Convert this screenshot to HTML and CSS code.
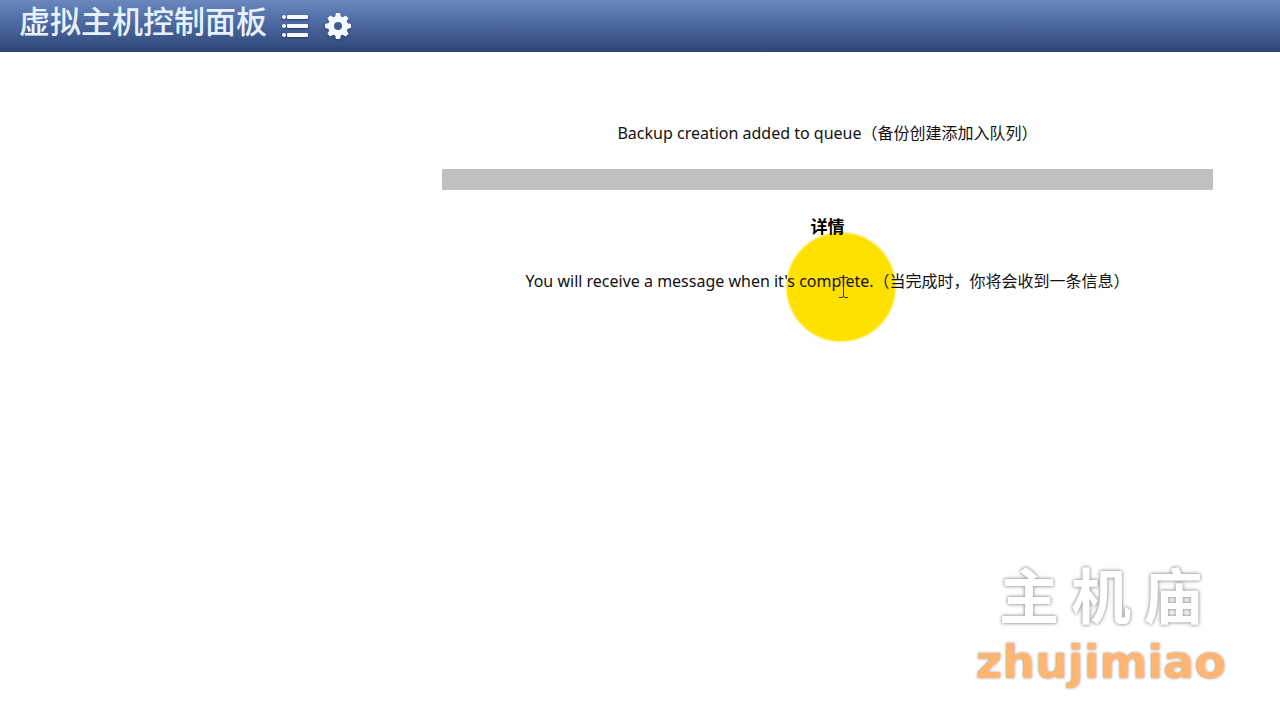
FILE: index.html
```html
<!DOCTYPE html>
<html lang="zh-CN">
<head>
  <meta charset="UTF-8">
  <title>虚拟主机控制面板</title>
  <link rel="stylesheet" href="styles.css">
</head>
<body>
  <header class="topbar">
    <h1 class="brand">虚拟主机控制面板</h1>
    <nav class="tools">
      <button type="button" class="tool" aria-label="菜单">
        <svg width="28" height="28" viewBox="0 0 28 28" fill="#f4faff">
          <circle cx="3" cy="5" r="2"/>
          <circle cx="3" cy="14" r="2"/>
          <circle cx="3" cy="23" r="2"/>
          <rect x="6" y="3" width="21" height="4" rx="1"/>
          <rect x="6" y="12" width="21" height="4" rx="1"/>
          <rect x="6" y="21" width="21" height="4" rx="1"/>
        </svg>
      </button>
      <button type="button" class="tool" aria-label="设置">
        <svg width="28" height="28" viewBox="0 0 28 28">
          <g fill="#f4faff">
            <path id="teeth" d="M11 5 12 1h4l1 4v18l-1 4h-4l-1-4z"/>
            <use href="#teeth" transform="rotate(45 14 14)"/>
            <use href="#teeth" transform="rotate(90 14 14)"/>
            <use href="#teeth" transform="rotate(135 14 14)"/>
            <circle cx="14" cy="14" r="10"/>
          </g>
          <circle cx="14" cy="14" r="4" fill="#435c8e"/>
        </svg>
      </button>
    </nav>
  </header>

  <main class="content">
    <p class="status">Backup creation added to queue（备份创建添加入队列）</p>
    <div class="divider"></div>
    <h2 class="details-title">详情</h2>
    <p class="message">You will receive a message when it's complete.（当完成时，你将会收到一条信息）</p>
  </main>

  <!-- Click highlight and text cursor -->
  <div class="highlight"></div>
  <svg class="cursor" width="11" height="21" viewBox="0 0 11 21" fill="none" stroke="#333">
    <path d="M1 .5h3l1.500 1 1.500-1h3M5.500 1v19M1 20.500h3l1.500-1 1.500 1h3"/>
  </svg>

  <!-- Watermark -->
  <div class="watermark">
    <div class="mark-cn"><span>主</span><span>机</span><span>庙</span></div>
    <div class="mark-en">zhujimiao</div>
  </div>
</body>
</html>
```

FILE: styles.css
```css
body {
  margin: 0;
  background: #fff;
  color: #111;
  font-family: "Noto Sans", "Noto Sans CJK SC", sans-serif;
  font-size: 16px;
  line-height: 24px;
}
.topbar {
  display: flex;
  align-items: center;
  gap: 14px;
  height: 52px;
  padding-left: 19px;
  background: linear-gradient(#6a87be, #4d69a1 45%, #2e4675);
}
.brand {
  margin: 0;
  padding-bottom: 6px;
  color: #e6f3ff;
  font-family: "Liberation Sans", "Noto Sans CJK SC", sans-serif;
  font-size: 31px;
  font-weight: 500;
  line-height: 40px;
}
.tools {
  display: flex;
  gap: 15px;
}
.tool {
  padding: 0;
  border: 0;
  background: none;
  cursor: pointer;
}
.tool svg {
  display: block;
  filter: drop-shadow(0 1px 1px #24385f);
}
.content {
  position: relative;
  z-index: 1;
  margin-left: 442px;
  margin-right: 67px;
  padding-top: 69px;
  text-align: center;
}
.status {
  margin: 0 0 24px;
}
.divider {
  height: 21px;
  border-radius: 1px;
  background: #c0c0c0;
}
.details-title {
  margin: 25px 0 30px;
  color: #000;
  font-size: 17px;
  font-weight: 700;
  line-height: 24px;
}
.message {
  margin: 0;
}
.highlight {
  position: absolute;
  top: 231px;
  left: 785px;
  width: 112px;
  height: 112px;
  border-radius: 50%;
  background: radial-gradient(closest-side, #ffe100 95%, #fff);
}
.cursor {
  position: absolute;
  z-index: 2;
  top: 277px;
  left: 838px;
}
.watermark {
  position: absolute;
  right: 54px;
  bottom: 28px;
  text-align: center;
}
.mark-cn {
  display: flex;
  justify-content: center;
  gap: 12px;
  color: #fff;
  font-family: "Noto Sans CJK SC", sans-serif;
  font-size: 60px;
  font-weight: 700;
  line-height: 78px;
  text-shadow: 0 0 3px #999, 0 0 4px #aaa;
}
.mark-en {
  color: #ffb673;
  font-family: "DejaVu Sans", sans-serif;
  font-size: 46px;
  font-weight: 700;
  line-height: 60px;
  text-shadow: 0 0 3px #999;
}
```
